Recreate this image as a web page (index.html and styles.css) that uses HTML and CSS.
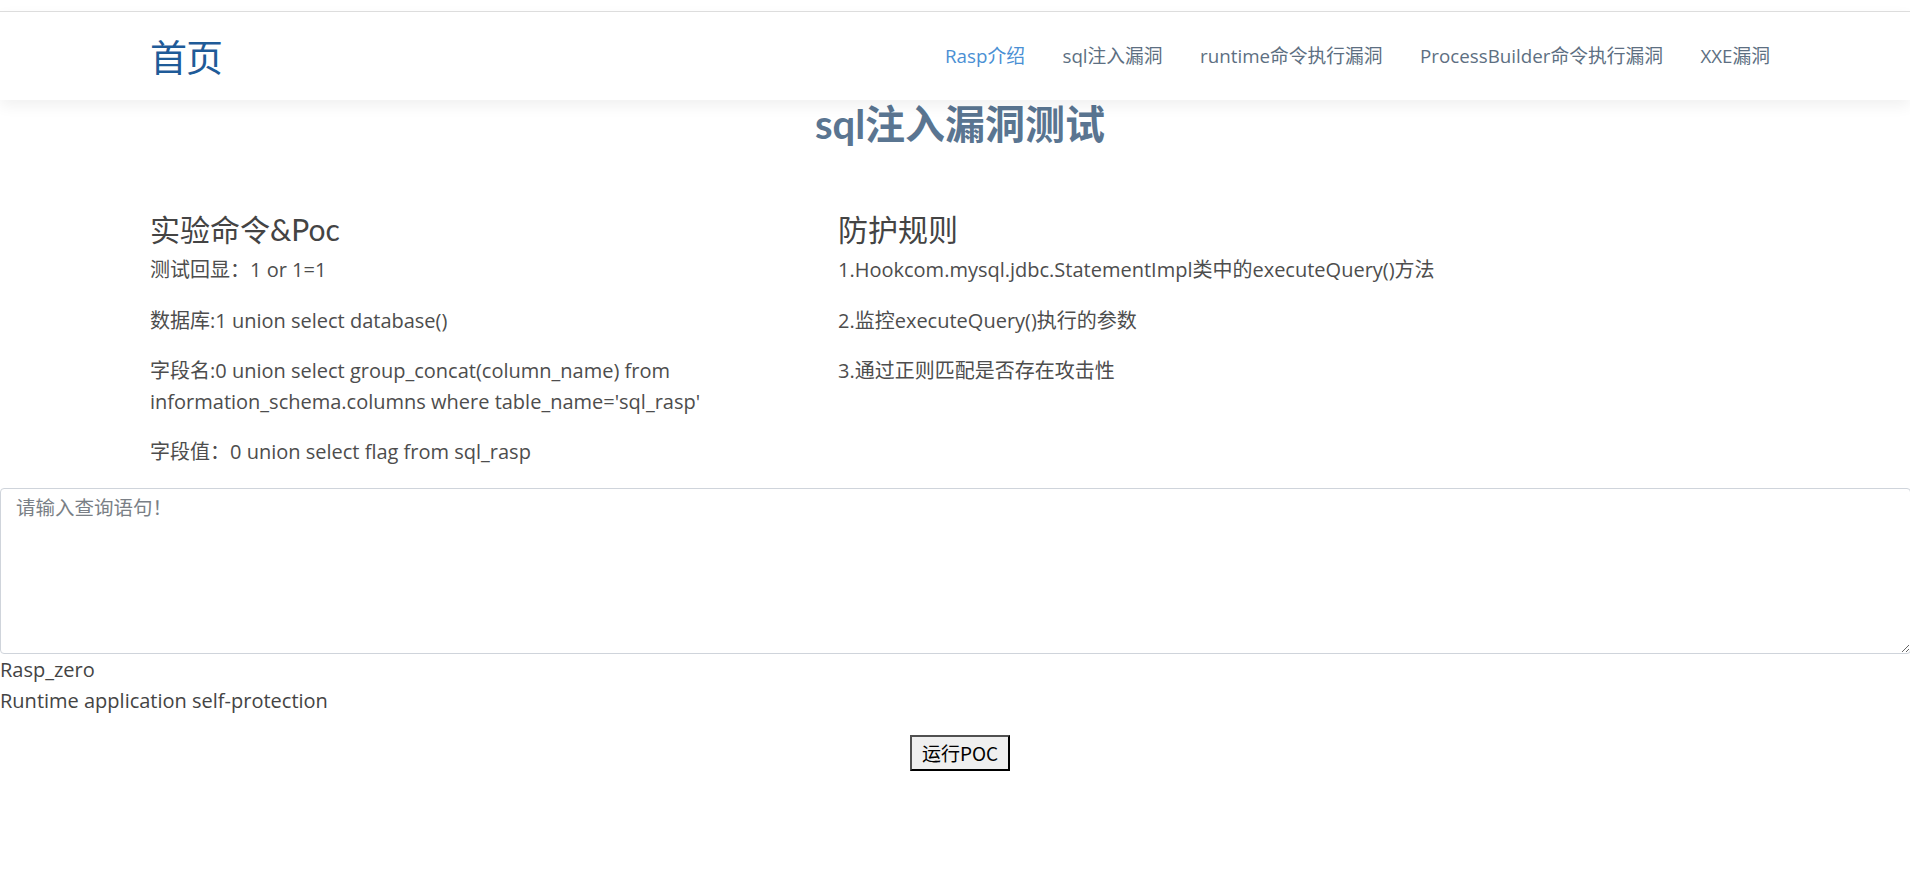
FILE: index.html
```html
<!DOCTYPE html>
<html lang="zh-CN">
<head>
<meta charset="utf-8">
<title>sql注入漏洞测试</title>
<link rel="stylesheet" href="styles.css">
</head>
<body>
<header class="navbar">
  <div class="navbar-inner">
    <a class="brand" href="#">首页</a>
    <nav class="nav">
      <a class="nav-link active" href="#">Rasp介绍</a>
      <a class="nav-link" href="#">sql注入漏洞</a>
      <a class="nav-link" href="#">runtime命令执行漏洞</a>
      <a class="nav-link" href="#">ProcessBuilder命令执行漏洞</a>
      <a class="nav-link" href="#">XXE漏洞</a>
    </nav>
  </div>
</header>

<main>
  <h1 class="page-title">sql注入漏洞测试</h1>

  <section class="columns">
    <div class="col">
      <h3 class="col-title">实验命令&amp;Poc</h3>
      <p>测试回显：1 or 1=1</p>
      <p>数据库:1 union select database()</p>
      <p>字段名:0 union select group_concat(column_name) from information_schema.columns where table_name='sql_rasp'</p>
      <p>字段值：0 union select flag from sql_rasp</p>
    </div>
    <div class="col">
      <h3 class="col-title">防护规则</h3>
      <p>1.Hookcom.mysql.jdbc.StatementImpl类中的executeQuery()方法</p>
      <p>2.监控executeQuery()执行的参数</p>
      <p>3.通过正则匹配是否存在攻击性</p>
    </div>
  </section>

  <textarea class="query" placeholder="请输入查询语句！"></textarea>

  <div class="footer-text">
    <div>Rasp_zero</div>
    <div>Runtime application self-protection</div>
  </div>

  <div class="actions">
    <button class="run-btn" type="button">运行POC</button>
  </div>
</main>
</body>
</html>
```

FILE: styles.css
```css
html {
  overflow-x: hidden;
}

body {
  margin: 0;
  background: #ffffff;
  color: #444444;
  font-family: "Open Sans", "Noto Sans CJK SC", sans-serif;
  font-size: 20px;
  line-height: 31px;
}

a {
  text-decoration: none;
}

.navbar {
  margin-top: 11px;
  border-top: 1px solid #dddddd;
  background: #ffffff;
  box-shadow: 0 6px 14px rgba(0, 0, 0, 0.06);
  position: relative;
  z-index: 2;
}

.navbar-inner {
  height: 88px;
  display: flex;
  align-items: center;
  justify-content: space-between;
  padding: 0 140px 0 150px;
}

.brand {
  font-family: "Noto Sans CJK SC", sans-serif;
  font-size: 37px;
  color: #1f5b98;
  line-height: 1;
  letter-spacing: -1px;
}

.nav {
  display: flex;
  gap: 37.5px;
}

.nav-link {
  font-size: 18.75px;
  color: #5d6f82;
  line-height: 1;
}

.nav-link.active {
  color: #4a8fd4;
}

.page-title {
  margin: 0;
  padding-left: 10px;
  text-align: center;
  font-family: "Lato", "Noto Sans CJK SC", sans-serif;
  font-weight: 700;
  font-size: 40px;
  line-height: 48px;
  color: #5a7591;
}

.columns {
  display: grid;
  grid-template-columns: 658px 658px;
  column-gap: 30px;
  margin: 63px 0 0 150px;
}

.col-title {
  margin: 0 0 8px;
  font-family: "Lato", "Noto Sans CJK SC", sans-serif;
  font-weight: 400;
  font-size: 30px;
  line-height: 36px;
  color: #444444;
}

.col p {
  margin: 0 0 20px;
  font-size: 20px;
  line-height: 30.5px;
  color: #4d4d4d;
}

.query {
  display: block;
  box-sizing: border-box;
  width: calc(100% + 1px);
  height: 166px;
  margin: 0;
  padding: 6px 15px;
  border: 1px solid #cfd4db;
  border-radius: 4px;
  font-family: "Open Sans", "Noto Sans CJK SC", sans-serif;
  font-size: 19.5px;
  line-height: 26px;
  color: #555555;
  background: #ffffff;
}

.query::placeholder {
  color: #7a7f86;
}

.footer-text {
  color: #444444;
}

.actions {
  margin-top: 19px;
  padding-left: 10px;
  display: flex;
  justify-content: center;
}

.run-btn {
  width: 100px;
  height: 36px;
  padding: 0;
  background: #efefef;
  border: 2px solid;
  border-color: #505050 #000000 #000000 #505050;
  font-family: "Noto Sans CJK SC", "Open Sans", sans-serif;
  font-size: 19px;
  color: #000000;
}
```
